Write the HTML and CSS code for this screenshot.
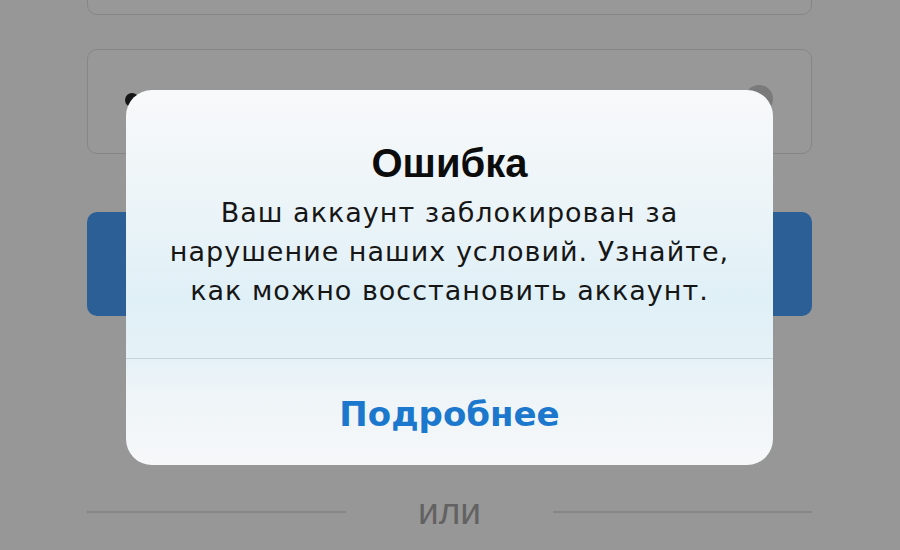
FILE: index.html
```html
<!DOCTYPE html>
<html lang="ru">
<head>
<meta charset="utf-8">
<link rel="stylesheet" href="styles.css">
</head>
<body>
<div class="screen">
  <div class="form">
    <div class="field"></div>
    <div class="field pass">
      <span class="dot"></span>
      <span class="eye"></span>
    </div>
    <div class="login"></div>
    <div class="divider">
      <span class="line"></span>
      <span class="or">или</span>
      <span class="line"></span>
    </div>
  </div>
  <div class="alert">
    <div class="alert-body">
      <div class="alert-title">Ошибка</div>
      <div class="alert-text">Ваш аккаунт заблокирован за<br>нарушение наших условий. Узнайте,<br>как можно восстановить аккаунт.</div>
    </div>
    <div class="alert-action">Подробнее</div>
  </div>
</div>
</body>
</html>
```
FILE: styles.css
```css
html, body {
  margin: 0;
  padding: 0;
}
body {
  width: 900px;
  height: 550px;
  overflow: hidden;
  background: #979797;
  font-family: "Liberation Sans", Arial, sans-serif;
}
.screen {
  position: relative;
  display: flow-root;
  width: 900px;
  height: 550px;
}
.form {
  margin-left: 87px;
  width: 725px;
  margin-top: -90px;
  display: flex;
  flex-direction: column;
}
.field {
  height: 103px;
  border: 1px solid #868686;
  border-radius: 10px;
  background: #989898;
  margin-bottom: 34px;
  position: relative;
}
.pass {
  margin-bottom: 58px;
}
.dot {
  position: absolute;
  left: 37px;
  top: 43px;
  width: 14px;
  height: 14px;
  border-radius: 50%;
  background: #151515;
}
.eye {
  position: absolute;
  left: 657px;
  top: 35px;
  width: 28px;
  height: 28px;
  border-radius: 50%;
  background: #7a7a7a;
}
.login {
  height: 104px;
  border-radius: 10px;
  background: #2b5f95;
}
.divider {
  margin-top: 174px;
  display: flex;
  align-items: center;
  gap: 72px;
}
.line {
  flex: 1;
  height: 2px;
  background: #868686;
}
.or {
  font-size: 37px;
  color: #626262;
  line-height: 44px;
}
.alert {
  position: absolute;
  left: 126px;
  top: 90px;
  width: 647px;
  height: 375px;
  border-radius: 26px;
  overflow: hidden;
  background: linear-gradient(180deg, #f8f9fa 0%, #eef5f8 25%, #e0f0f7 55%, #e4f1f7 70%, #eef4f8 80%, #f6f8f9 100%);
  display: flex;
  flex-direction: column;
}
.alert-body {
  height: 268px;
  border-bottom: 1px solid #c5d3da;
  display: flex;
  flex-direction: column;
  align-items: center;
  text-align: center;
}
.alert-title {
  margin-top: 51px;
  font-size: 40px;
  font-weight: bold;
  color: #0c0c0c;
  line-height: 44px;
}
.alert-text {
  margin-top: 8px;
  font-family: "DejaVu Sans", sans-serif;
  font-size: 27px;
  letter-spacing: 1px;
  line-height: 39px;
  color: #161616;
}
.alert-action {
  flex: 1;
  display: flex;
  align-items: center;
  justify-content: center;
  padding-top: 4px;
  font-family: "DejaVu Sans", sans-serif;
  font-size: 34px;
  font-weight: bold;
  color: #1c78cd;
}
```
